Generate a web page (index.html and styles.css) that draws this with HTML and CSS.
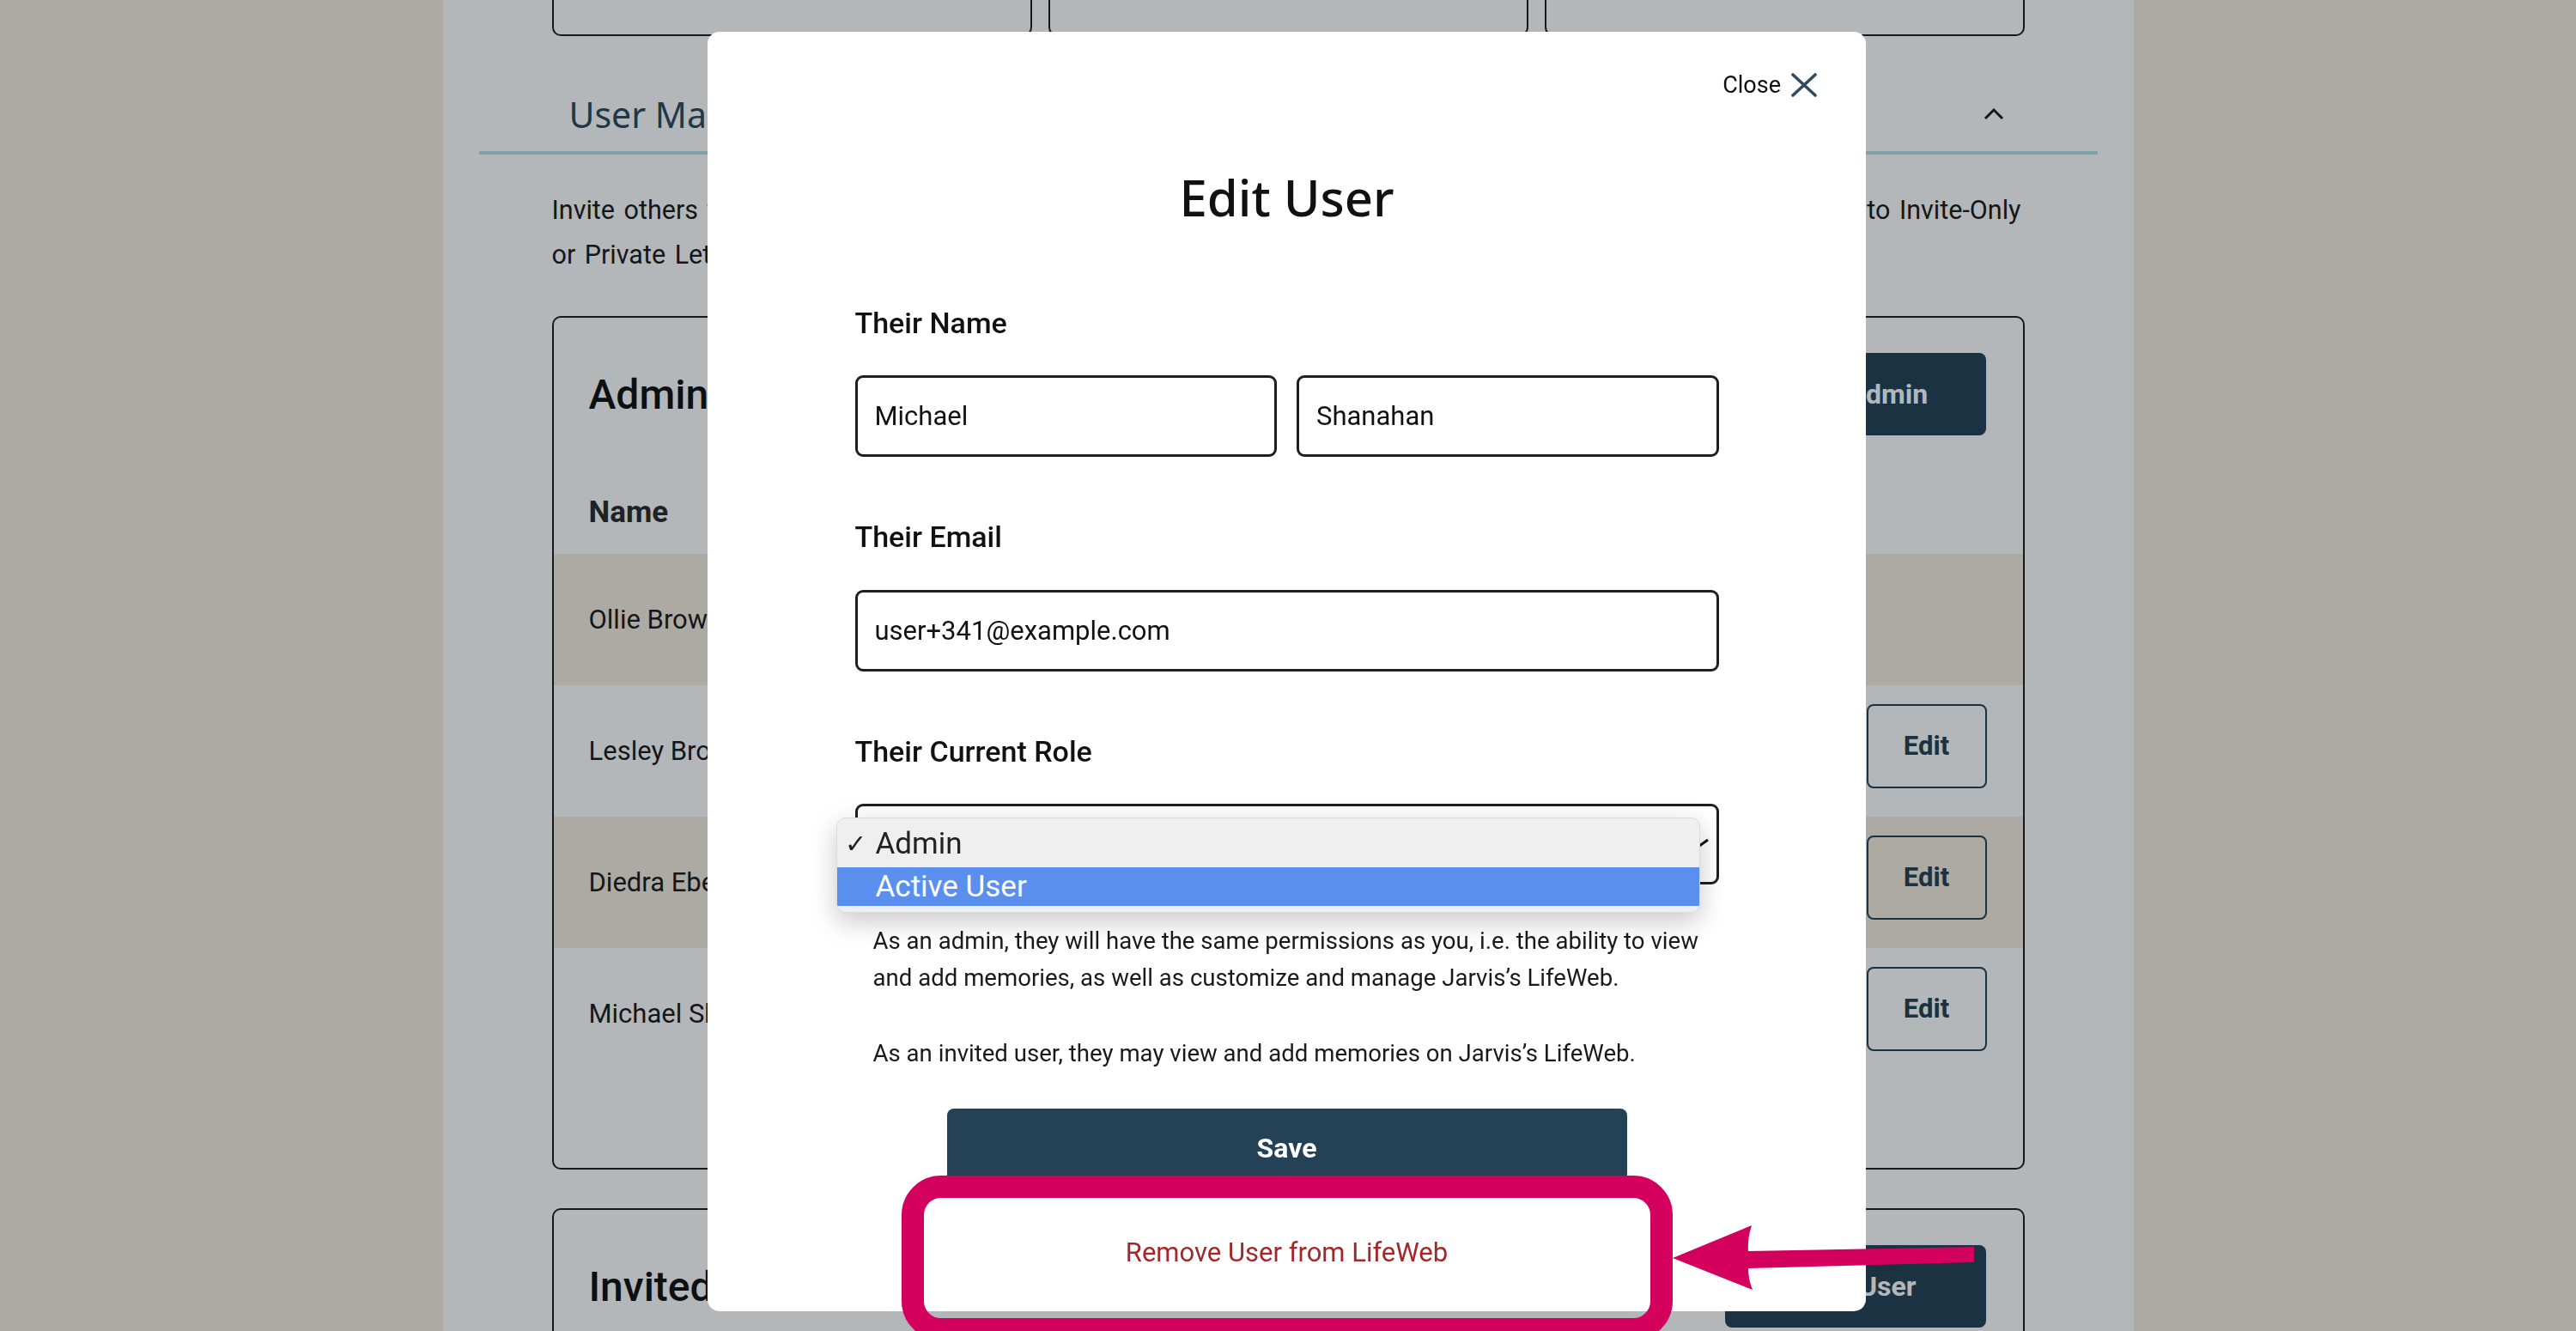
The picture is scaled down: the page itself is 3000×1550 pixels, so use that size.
FILE: index.html
```html
<!DOCTYPE html>
<html lang="en">
<head>
<meta charset="utf-8">
<title>Edit User</title>
<link rel="stylesheet" href="styles.css">
</head>
<body>
<div class="page">
  <main class="column">
    <div class="stat-row">
      <div class="stat-card"></div>
      <div class="stat-card"></div>
      <div class="stat-card"></div>
    </div>
    <section class="users">
      <header class="section-head">
        <h2>User Management</h2>
        <svg class="chev-up" width="26" height="16" viewBox="0 0 26 16"><path d="M3 13 L13 3 L23 13" fill="none" stroke="#1a1a1a" stroke-width="3"/></svg>
      </header>
      <p class="intro"><span class="l1"><span>Invite others to view and add memories to Jarvis's LifeWeb.</span><span>Admins can change the privacy to Invite-Only</span></span>or Private Letters for the family.</p>

      <div class="card">
        <div class="card-head">
          <h3>Admins</h3>
          <button class="btn-dark">Add Admin</button>
        </div>
        <div class="list-head">Name</div>
        <div class="row alt"><span>Ollie Brown</span></div>
        <div class="row"><span>Lesley Brown</span><button class="btn-edit">Edit</button></div>
        <div class="row alt"><span>Diedra Eberhardt</span><button class="btn-edit">Edit</button></div>
        <div class="row"><span>Michael Shanahan</span><button class="btn-edit">Edit</button></div>
        <div class="card-foot"></div>
      </div>

      <div class="card">
        <div class="card-head">
          <h3>Invited Users</h3>
          <button class="btn-dark">Add User</button>
        </div>
        <div class="card-foot"></div>
      </div>
    </section>
  </main>
</div>

<div class="backdrop"></div>

<div class="modal">
  <div class="modal-top">
    <button class="close">Close
      <svg width="32" height="28" viewBox="0 0 32 28"><path d="M3 2 L29 26 M29 2 L3 26" fill="none" stroke="#2f4b5c" stroke-width="3.6" stroke-linecap="round"/></svg>
    </button>
  </div>
  <h1 class="modal-title">Edit User</h1>
  <form class="form">
    <label class="label first">Their Name</label>
    <div class="name-row">
      <div class="input">Michael</div>
      <div class="input">Shanahan</div>
    </div>
    <label class="label">Their Email</label>
    <div class="input email">user+341@example.com</div>
    <label class="label">Their Current Role</label>
    <div class="select">
      <svg class="sel-chev" width="34" height="16" viewBox="0 0 34 16"><path d="M3 3 L17 13 L31 3" fill="none" stroke="#111" stroke-width="3"/></svg>
      <div class="popup">
        <div class="opt"><span class="check">✓</span>Admin</div>
        <div class="opt active">Active User</div>
      </div>
    </div>
    <div class="desc">
      <p>As an admin, they will have the same permissions as you, i.e. the ability to view and add memories, as well as customize and manage Jarvis’s LifeWeb.</p>
      <p>As an invited user, they may view and add memories on Jarvis’s LifeWeb.</p>
    </div>
    <button type="button" class="save">Save</button>
    <button type="button" class="remove">Remove User from LifeWeb</button>
  </form>
</div>

<div class="note-frame"></div>
<svg class="note-arrow" width="370" height="90" viewBox="0 0 370 90">
  <path d="M8 45 L100 7 Q95 22 96 37 L359 32 L359 50 L96 57 Q96 70 101 82 Z" fill="#d4005e"/>
</svg>
</body>
</html>
```
FILE: styles.css
```css
* { box-sizing: border-box; }
html, body { margin: 0; height: 100%; }
body {
  background: #f5ebe1;
  font-family: Roboto, "Liberation Sans", sans-serif;
  color: #111;
  overflow: hidden;
}
button { font-family: Roboto, "Liberation Sans", sans-serif; cursor: pointer; }

.column {
  width: 1969px;
  margin: 0 auto;
  background: #fff;
  min-height: 1600px;
}
.stat-row {
  display: grid;
  grid-template-columns: repeat(3, 1fr);
  gap: 19px;
  padding: 0 127px;
  margin-top: -150px;
}
.stat-card {
  height: 192px;
  border: 2px solid #1e1e1e;
  border-radius: 10px;
}

.section-head {
  margin: 0 42px;
  display: flex;
  align-items: center;
  justify-content: space-between;
  padding: 67px 108px 19px 105px;
  border-bottom: 4px solid #b3e0e9;
}
.section-head h2 {
  margin: 0;
  font-family: "Noto Sans", "Open Sans", sans-serif;
  font-size: 41px;
  line-height: 48px;
  font-weight: 400;
  color: #2a4a5e;
}
.intro {
  margin: 39px 127px 0;
  font-size: 30.5px;
  line-height: 52px;
  word-spacing: 3px;
  color: #1a1a1a;
}
.intro .l1 {
  display: flex;
  justify-content: space-between;
  padding-right: 4px;
}

.card {
  margin: 45px 127px 0;
  border: 2px solid #1e1e1e;
  border-radius: 10px;
}
.card-head {
  display: flex;
  justify-content: space-between;
  align-items: center;
  padding: 41px 43px 0 41px;
}
.card-head h3 {
  margin: 0;
  font-size: 48px;
  font-weight: 500;
  color: #111;
}
.btn-dark {
  width: 304px;
  height: 96px;
  padding-left: 16px;
  background: #244156;
  color: #fff;
  border: none;
  border-radius: 8px;
  font-size: 32px;
  font-weight: 700;
}
.list-head {
  margin-top: 41px;
  height: 97px;
  display: flex;
  align-items: center;
  padding-left: 41px;
  font-size: 35px;
  font-weight: 700;
  color: #2a2a2a;
}
.row {
  height: 153px;
  display: flex;
  align-items: center;
  justify-content: space-between;
  padding: 0 42px 0 41px;
  font-size: 31px;
  color: #1a1a1a;
}
.row.alt { background: #f5ebe0; }
.btn-edit {
  width: 140px;
  height: 98px;
  margin-bottom: 12px;
  border: 2px solid #244156;
  border-radius: 8px;
  background: transparent;
  color: #244156;
  font-size: 31px;
  font-weight: 700;
}
.card-foot { height: 103px; }

.backdrop {
  position: fixed;
  inset: 0;
  background: rgba(5, 18, 22, 0.3);
}

.modal {
  position: fixed;
  left: 824px;
  top: 37px;
  width: 1349px;
  height: 1490px;
  background: #fff;
  border-radius: 14px;
  overflow: hidden;
}
.modal-top {
  display: flex;
  justify-content: flex-end;
  padding: 42px 56px 0 0;
  height: 82px;
}
.close {
  display: flex;
  align-items: center;
  gap: 11px;
  height: 40px;
  padding: 0;
  background: none;
  border: none;
  font-size: 27px;
  color: #111;
}
.modal-title {
  margin: 75px 0 0;
  text-align: center;
  font-family: "Noto Sans", "Open Sans", sans-serif;
  font-size: 58px;
  line-height: 72px;
  font-weight: 500;
  color: #111;
}
.form {
  width: 1006px;
  margin: 0 auto;
  display: flex;
  flex-direction: column;
}
.label {
  display: block;
  margin-top: 73px;
  font-size: 34px;
  line-height: 40px;
  font-weight: 500;
  color: #111;
}
.label.first { margin-top: 90px; }
.name-row {
  margin-top: 41px;
  display: grid;
  grid-template-columns: 1fr 1fr;
  gap: 23px;
}
.input {
  height: 95px;
  border: 3px solid #1f1f1f;
  border-radius: 9px;
  padding-left: 20px;
  display: flex;
  align-items: center;
  font-size: 31px;
  color: #111;
}
.input.email { margin-top: 42px; }
.select {
  position: relative;
  margin-top: 41px;
  height: 94px;
  border: 3px solid #1f1f1f;
  border-radius: 9px;
}
.sel-chev {
  position: absolute;
  right: 7px;
  top: 36px;
}
.popup {
  position: absolute;
  left: -25px;
  top: 13px;
  width: 1006px;
  height: 111px;
  background: #efefef;
  border: 1px solid #dcdcdc;
  border-radius: 10px;
  box-shadow: 0 10px 30px rgba(0, 0, 0, 0.22);
  padding-top: 2px;
  overflow: hidden;
}
.opt {
  height: 55px;
  display: flex;
  align-items: center;
  padding-left: 45px;
  position: relative;
  font-size: 35px;
  color: #222;
}
.opt.active {
  height: 45px;
  background: #5b8fee;
  color: #fff;
}
.check {
  position: absolute;
  left: 9px;
  font-size: 30px;
  color: #222;
}
.desc {
  margin-top: 44px;
  padding: 0 12px 0 21px;
  font-size: 27.6px;
  line-height: 43px;
  color: #1a1a1a;
}
.desc p { margin: 0; }
.desc p + p { margin-top: 45px; }
.save {
  margin: 43px auto 0;
  width: 792px;
  height: 92px;
  background: #244156;
  color: #fff;
  border: none;
  border-radius: 8px;
  font-size: 32px;
  font-weight: 700;
}
.remove {
  margin: 20px auto 0;
  width: 792px;
  height: 110px;
  background: #fff;
  border: none;
  color: #a3282a;
  font-size: 31px;
}

.note-frame {
  position: fixed;
  left: 1050px;
  top: 1369px;
  width: 898px;
  height: 192px;
  border: 26px solid #d4005e;
  border-radius: 46px;
}
.note-arrow {
  position: fixed;
  left: 1940px;
  top: 1420px;
}
```
